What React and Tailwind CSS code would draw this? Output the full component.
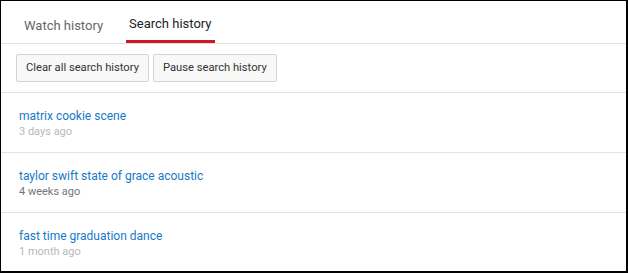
import React from 'react';

const items = [
    { q: 'matrix cookie scene', when: '3 days ago', dim: true },
    { q: 'taylor swift state of grace acoustic', when: '4 weeks ago', dim: false },
    { q: 'fast time graduation dance', when: '1 month ago', dim: true },
];

const App = () => {
    return (
        <div className="w-[628px] h-[273px] bg-white border-t border-l border-r-2 border-b-2 border-black font-['Roboto',sans-serif] overflow-hidden">
            {/* Tabs */}
            <div className="h-[43px] flex items-stretch gap-[20px] pl-[20px] border-b border-[#e2e2e2]">
                <div className="px-[3px] flex items-center text-[13px] text-[#666] pt-[7px]">Watch history</div>
                <div className="px-[3px] flex items-center text-[13px] text-[#222] pt-[7px] border-b-[3px] border-[#cc181e]">Search history</div>
            </div>

            {/* Actions */}
            <div className="flex gap-[4px] pl-[15px] py-[10px] border-b border-[#e2e2e2]">
                <button className="h-[28px] px-[9px] text-[11.2px] text-[#333] bg-[#f8f8f8] border border-[#d3d3d3] rounded-[2px]">
                    Clear all search history
                </button>
                <button className="h-[28px] px-[9px] text-[11.2px] text-[#333] bg-[#f8f8f8] border border-[#d3d3d3] rounded-[2px]">
                    Pause search history
                </button>
            </div>

            {/* History rows */}
            {items.map((item, i) => (
                <div key={i} className={`h-[60px] pl-[18px] pt-[16px] ${i < items.length - 1 ? 'border-b border-[#e2e2e2]' : ''}`}>
                    <div className="text-[12px] leading-[15px] text-[#167ac6]">{item.q}</div>
                    <div className={`text-[11px] leading-[15px] ${item.dim ? 'text-[#b8b8b8]' : 'text-[#767676]'}`}>{item.when}</div>
                </div>
            ))}
        </div>
    );
};

export default App;
